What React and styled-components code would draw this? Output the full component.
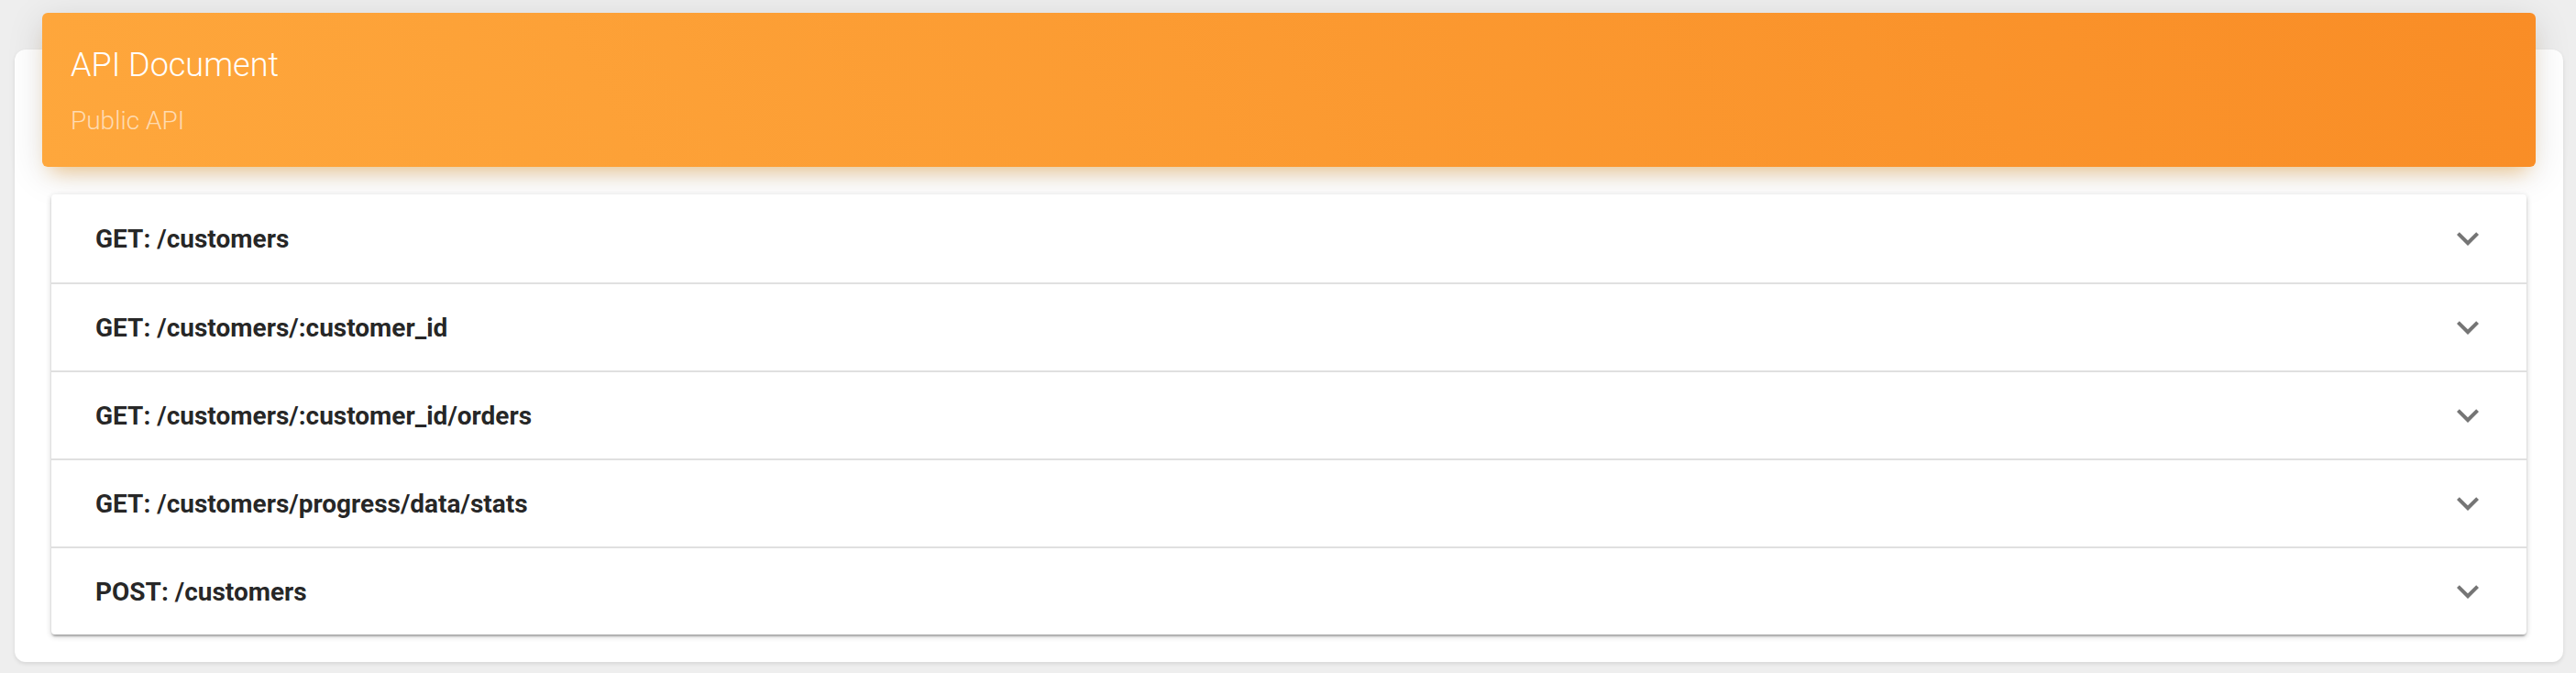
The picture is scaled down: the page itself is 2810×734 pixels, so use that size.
import React from "react";
import styled, { createGlobalStyle } from "styled-components";

const GlobalStyle = createGlobalStyle`
  html, body {
    margin: 0;
    padding: 0;
    background: #eeeeee;
    font-family: Roboto, "Helvetica Neue", Arial, sans-serif;
  }
`;

const Page = styled.div`
  padding: 54px 14px 12px 16px;
`;

const Card = styled.section`
  background: #ffffff;
  border-radius: 12px;
  box-shadow: 0 2px 4px rgba(0, 0, 0, 0.1);
  padding: 0 40px 30px;
  display: flex;
  flex-direction: column;
`;

const Header = styled.header`
  margin: -40px -10px 30px;
  height: 168px;
  box-sizing: border-box;
  padding: 32px 31px;
  border-radius: 6px;
  background: linear-gradient(60deg, #fea73c, #f98d26);
  box-shadow: 0 8px 40px rgba(0, 0, 0, 0.12),
    0 14px 20px -10px rgba(255, 152, 0, 0.4);
  color: #ffffff;
`;

const Title = styled.h4`
  margin: 0;
  font-size: 36px;
  font-weight: 300;
  line-height: 1.4;
`;

const Subtitle = styled.p`
  margin: 16px 0 0;
  font-size: 28px;
  font-weight: 300;
  line-height: 1.4;
  color: rgba(255, 255, 255, 0.62);
`;

const Panel = styled.div`
  background: #ffffff;
  border-radius: 4px;
  box-shadow: 0 2px 6px rgba(0, 0, 0, 0.2), 0 2px 2px rgba(0, 0, 0, 0.14),
    0 4px 2px -2px rgba(0, 0, 0, 0.12);
  display: flex;
  flex-direction: column;
`;

const Row = styled.div`
  display: flex;
  align-items: center;
  justify-content: space-between;
  height: 96px;
  box-sizing: border-box;
  padding: 0 40px 0 48px;
  border-top: ${(p) => (p.$first ? "none" : "2px solid #e0e0e0")};
  cursor: pointer;
`;

const RowLabel = styled.span`
  font-size: 28px;
  font-weight: 700;
  color: rgba(0, 0, 0, 0.87);
`;

const Chevron = styled.svg`
  width: 48px;
  height: 48px;
  fill: rgba(0, 0, 0, 0.54);
  flex-shrink: 0;
`;

const ExpandIcon = () => (
  <Chevron viewBox="0 0 24 24" aria-hidden="true">
    <path d="M16.59 8.59L12 13.17 7.41 8.59 6 10l6 6 6-6z" />
  </Chevron>
);

const endpoints = [
  "GET: /customers",
  "GET: /customers/:customer_id",
  "GET: /customers/:customer_id/orders",
  "GET: /customers/progress/data/stats",
  "POST: /customers",
];

export default function App() {
  return (
    <>
      <GlobalStyle />
      <Page>
        <Card>
          <Header>
            <Title>API Document</Title>
            <Subtitle>Public API</Subtitle>
          </Header>
          <Panel>
            {endpoints.map((e, i) => (
              <Row key={e} $first={i === 0}>
                <RowLabel>{e}</RowLabel>
                <ExpandIcon />
              </Row>
            ))}
          </Panel>
        </Card>
      </Page>
    </>
  );
}
